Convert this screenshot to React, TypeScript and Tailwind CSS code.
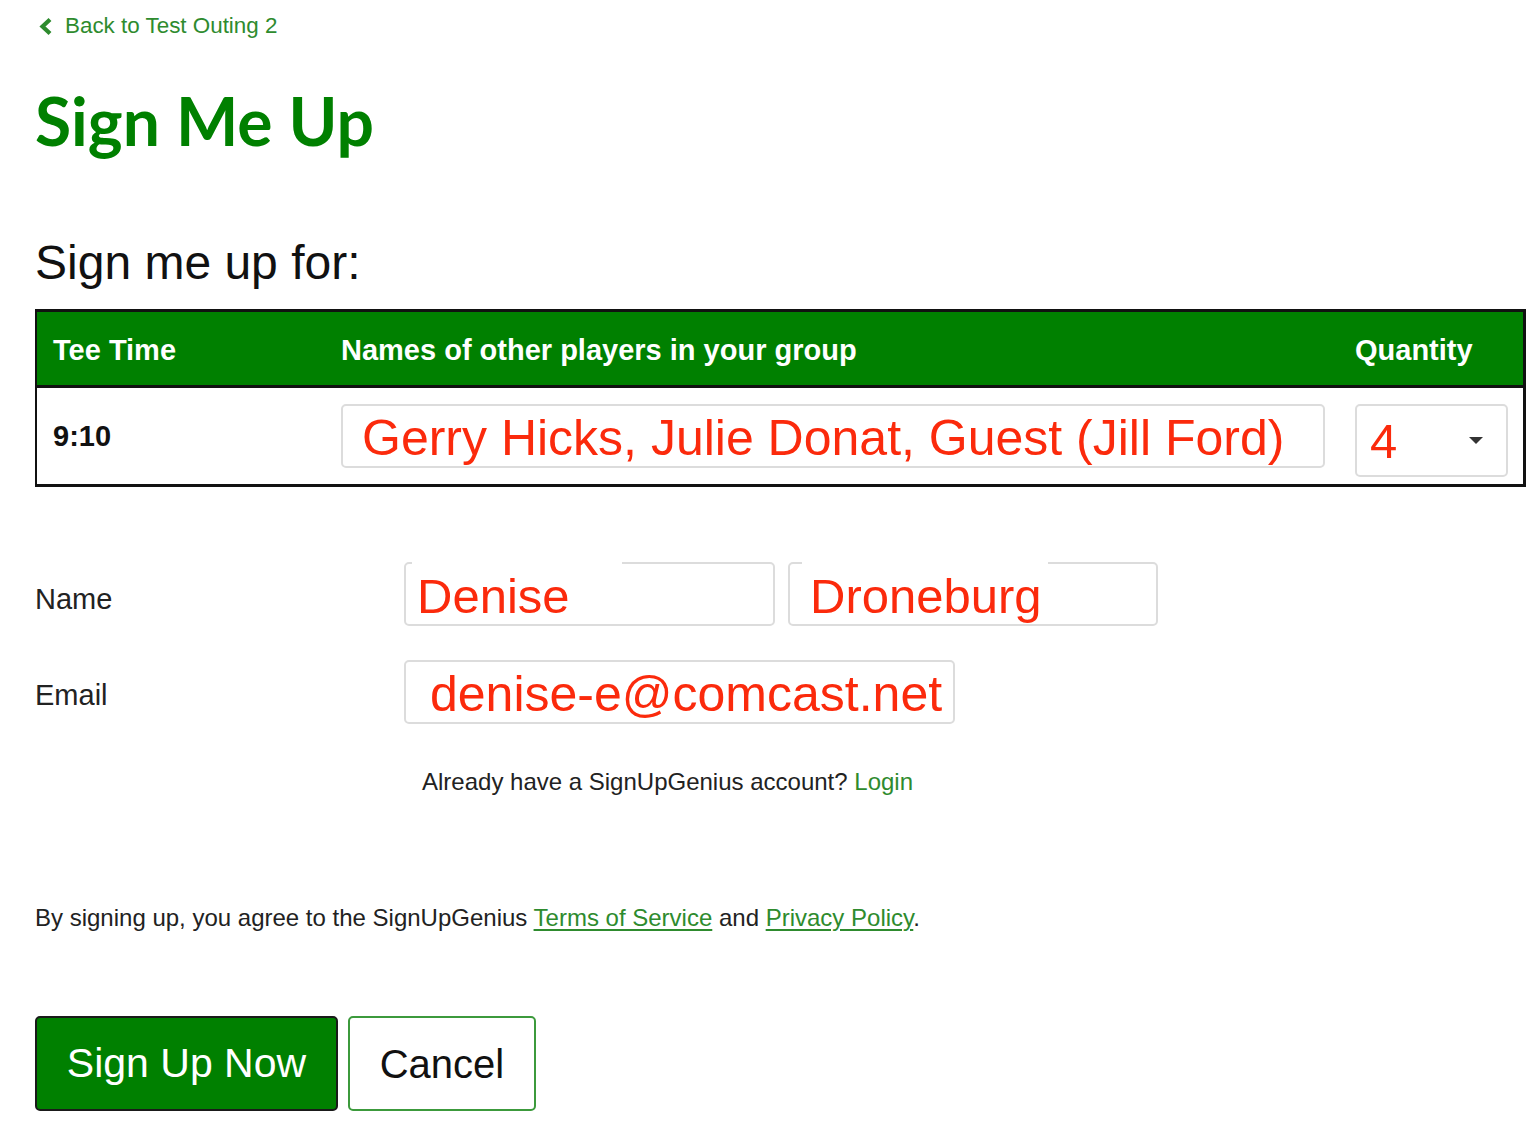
import React from 'react';

function Field({
  text,
  width,
  pad,
  size = 'text-[49px]',
  patch,
}: {
  text: string;
  width: string;
  pad: string;
  size?: string;
  patch?: string;
}) {
  return (
    <div className={`relative flex h-[64px] items-center rounded-[5px] border-2 border-[#dcdcdc] bg-white ${width} ${pad}`}>
      {patch && <span className={`absolute top-[-2px] h-[3px] bg-white ${patch}`} />}
      <span className={`pt-[4px] leading-none text-[#fb2a0c] ${size}`}>{text}</span>
    </div>
  );
}

export default function App() {
  return (
    <div className="min-h-screen bg-white pl-[35px] pt-[13px] font-['Liberation_Sans',Arial,sans-serif] text-[#222]">
      {/* Back link */}
      <a href="#" className="flex w-fit items-center gap-[12px] text-[22.4px] leading-[26px] text-[#2e8b2e]">
        <svg width="15" height="19" viewBox="0 0 15 19" className="ml-[3px]">
          <path d="M12 2.5 L4.5 9.5 L12 16.5" fill="none" stroke="currentColor" strokeWidth="4.2" />
        </svg>
        <span>Back to Test Outing 2</span>
      </a>

      <h1 className="mt-[49px] font-['Lato',sans-serif] text-[66px] font-bold leading-[66px] text-[#008000]">
        Sign Me Up
      </h1>

      <h2 className="mt-[85px] text-[48px] leading-[48px] text-[#111]">Sign me up for:</h2>

      {/* Slot table */}
      <div className="mt-[22px] w-[1491px] border-[3px] border-l-2 border-[#111]">
        <div className="grid h-[76px] grid-cols-[304px_1014px_168px] items-center border-b-[3px] border-[#111] bg-[#008000] pt-[2px] text-[29px] font-bold leading-[32px] text-white">
          <div className="pl-[16px]">Tee Time</div>
          <div>Names of other players in your group</div>
          <div>Quantity</div>
        </div>
        <div className="grid h-[96px] grid-cols-[304px_1014px_168px] bg-white">
          <div className="flex items-center pl-[16px] text-[29px] font-bold leading-[32px] text-[#111]">9:10</div>
          <div className="pt-[16px]">
            <Field text="Gerry Hicks, Julie Donat, Guest (Jill Ford)" width="w-[984px]" pad="pl-[19px]" size="text-[50px]" />
          </div>
          <div className="pt-[16px]">
            <div className="flex h-[73px] w-[153px] items-center justify-between rounded-[5px] border-2 border-[#dcdcdc] pl-[13px] pr-[23px]">
              <span className="pt-[2px] text-[49px] leading-none text-[#fb2a0c]">4</span>
              <svg width="14" height="7" viewBox="0 0 14 7">
                <path d="M0 0 L14 0 L7 7 Z" fill="#333" />
              </svg>
            </div>
          </div>
        </div>
      </div>

      {/* Contact */}
      <div className="mt-[75px]">
        <div className="flex">
          <div className="w-[369px] pt-[21px] text-[29px] leading-[32px]">Name</div>
          <div className="flex gap-[13px]">
            <Field text="Denise" width="w-[371px]" pad="pl-[11px]" patch="left-[6px] w-[210px]" />
            <Field text="Droneburg" width="w-[370px]" pad="pl-[20px]" patch="left-[12px] w-[246px]" />
          </div>
        </div>
        <div className="mt-[34px] flex">
          <div className="w-[369px] pt-[19px] text-[29px] leading-[32px]">Email</div>
          <Field text="denise-e@comcast.net" width="w-[551px]" pad="pl-[24px]" size="text-[50px]" />
        </div>
        <p className="mt-[44px] pl-[387px] text-[24px] leading-[28px]">
          Already have a SignUpGenius account?{' '}
          <a href="#" className="text-[#2e8b2e]">Login</a>
        </p>
      </div>

      <p className="mt-[108px] text-[24px] leading-[28px] text-[#222]">
        By signing up, you agree to the SignUpGenius{' '}
        <a href="#" className="text-[#2e8b2e] underline decoration-[1.5px] underline-offset-[3px]">Terms of Service</a>{' '}
        and{' '}
        <a href="#" className="text-[#2e8b2e] underline decoration-[1.5px] underline-offset-[3px]">Privacy Policy</a>.
      </p>

      <div className="mt-[84px] flex gap-[10px] pb-[16px]">
        <button className="h-[95px] w-[303px] rounded-[5px] border-2 border-[#1a1a1a] bg-[#008000] text-[41px] text-white">
          Sign Up Now
        </button>
        <button className="h-[95px] w-[188px] rounded-[5px] border-2 border-[#3c9a3c] bg-white text-[40px] text-[#111]">
          Cancel
        </button>
      </div>
    </div>
  );
}
